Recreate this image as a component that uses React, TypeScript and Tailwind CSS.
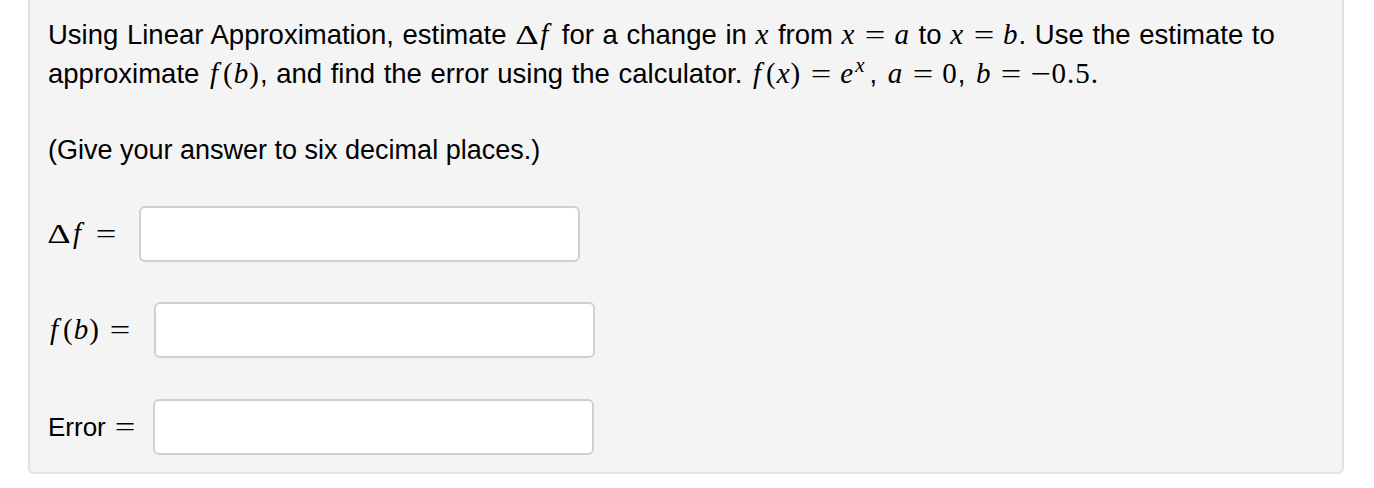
import React from "react";

const SERIF = '"Liberation Serif", "Times New Roman", serif';

const V = ({ children, c = "" }: { children: React.ReactNode; c?: string }) => (
  <span className={`italic text-[29px] tracking-[1px] ${c}`} style={{ fontFamily: SERIF }}>
    {children}
  </span>
);

const N = ({ children, c = "" }: { children: React.ReactNode; c?: string }) => (
  <span className={`text-[29px] tracking-[1px] ${c}`} style={{ fontFamily: SERIF }}>
    {children}
  </span>
);

const Eq = () => (
  <span className="mx-[9px] inline-block w-[21px] text-center text-[28px]" style={{ fontFamily: SERIF }}>
    <span className="inline-block scale-x-[1.3]">=</span>
  </span>
);

const Minus = () => (
  <span className="inline-block w-[21px] text-center text-[28px]" style={{ fontFamily: SERIF }}>
    <span className="inline-block scale-x-[1.3]">−</span>
  </span>
);

const Delta = () => (
  <span className="inline-block w-[23px] text-center text-[28px]" style={{ fontFamily: SERIF }}>
    <span className="inline-block scale-x-[1.3]">Δ</span>
  </span>
);

const F = () => <V c="pl-[2px] pr-[4px]">f</V>;

function Row({ label, mt, ml }: { label: React.ReactNode; mt: string; ml: string }) {
  return (
    <div className={`flex items-center ${mt}`}>
      <div className="whitespace-nowrap">{label}</div>
      <div className={`${ml} h-[56px] w-[441px] rounded-[6px] border-2 border-[#d0d0d0] bg-white`} />
    </div>
  );
}

export default function App() {
  return (
    <div
      className="w-[1374px] h-[488px] bg-white text-black"
      style={{ fontFamily: '"Liberation Sans", Arial, Helvetica, sans-serif' }}
    >
      <div className="ml-[28px] w-[1316px] h-[474px] rounded-b-[6px] border-x-2 border-b-2 border-[#e2e2e2] bg-[#f4f4f4] pl-[18px] pt-[15px]">
        <p className="text-[27.5px] leading-[39px] whitespace-nowrap [word-spacing:1px]">
          Using Linear Approximation, estimate <Delta />
          <F /> for a change in <V>x</V> from <V>x</V>
          <Eq />
          <V>a</V> to <V>x</V>
          <Eq />
          <V>b</V>. Use the estimate to
          <br />
          approximate <F />
          <N>(</N>
          <V>b</V>
          <N>)</N>, and find the error using the calculator. <F />
          <N>(</N>
          <V>x</V>
          <N>)</N>
          <Eq />
          <V>e</V>
          <sup
            className="italic text-[21px] leading-none relative -top-[11px] ml-[1px] mr-[5px]"
            style={{ fontFamily: SERIF }}
          >
            x
          </sup>
          ,<span className="ml-[2px]"> </span>
          <V>a</V>
          <Eq />
          <N>0</N>,<span className="ml-[2px]"> </span>
          <V>b</V>
          <Eq />
          <Minus />
          <N>0.5</N>
          <N>.</N>
        </p>
        <p className="mt-[38px] text-[27px] leading-[39px]">(Give your answer to six decimal places.)</p>
        <div className="text-[26px] leading-[39px]">
          <Row
            mt="mt-[36px]"
            ml="ml-[14px]"
            label={
              <>
                <Delta />
                <F />
                <Eq />
              </>
            }
          />
          <Row
            mt="mt-[40px]"
            ml="ml-[15px]"
            label={
              <>
                <F />
                <N>(</N>
                <V>b</V>
                <N>)</N>
                <Eq />
              </>
            }
          />
          <Row
            mt="mt-[41px]"
            ml="ml-[8px]"
            label={
              <>
                Error
                <Eq />
              </>
            }
          />
        </div>
      </div>
    </div>
  );
}
